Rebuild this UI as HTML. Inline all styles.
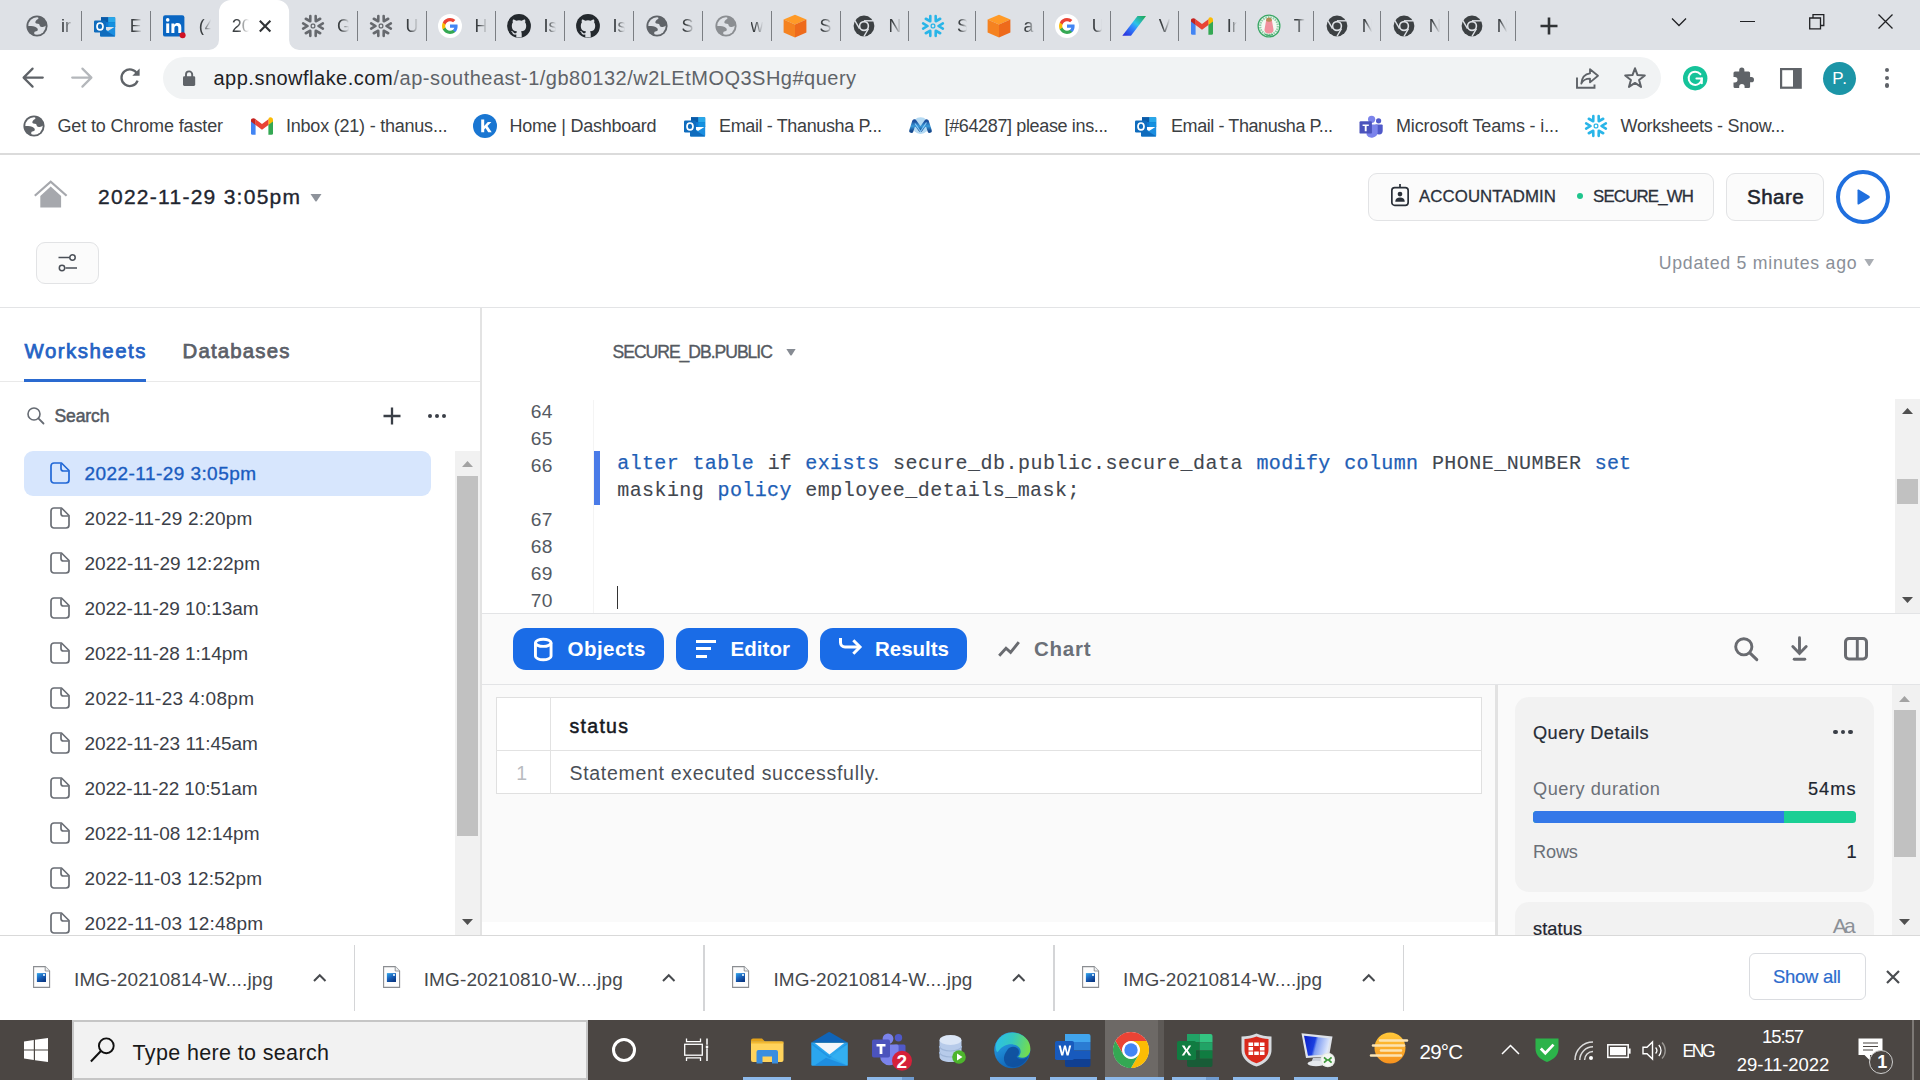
<!DOCTYPE html>
<html lang="en"><head><meta charset="utf-8"><title>2022-11-29 3:05pm - Snowflake</title>
<style>
*{box-sizing:border-box;margin:0;padding:0}
html,body{width:1920px;height:1080px;overflow:hidden;background:#fff}
body{position:relative;font-family:"Liberation Sans",sans-serif;color:#1e252f;-webkit-font-smoothing:antialiased}
div,span,svg,p,h1,h2,b,i,a,li,ul,nav,header,footer,section,aside,main,button{position:absolute;display:block;white-space:pre}
section,header,footer,aside,main,nav,ul{position:static}
svg{overflow:visible}
.m{font-family:"Liberation Mono",monospace}
.fade{-webkit-mask-image:linear-gradient(90deg,#000 0,#000 30%,transparent 100%);mask-image:linear-gradient(90deg,#000 0,#000 30%,transparent 100%);overflow:hidden}
</style></head>
<body>
<header>
<div style="left:0px;top:0px;width:1920px;height:50px;background:#dee1e6;"></div>
<svg style="left:0px;top:0px;" width="1920" height="50" viewBox="0 0 1920 50"><path d="M209 50A10 10 0 0 0 219 40L219 12A12 12 0 0 1 231 0L277.1 0A12 12 0 0 1 289.1 12L289.1 40A10 10 0 0 0 299.1 50Z" fill="#fff"/></svg>
<div style="left:81px;top:11px;width:1px;height:30px;background:#7b7e83;"></div>
<div style="left:150px;top:11px;width:1px;height:30px;background:#7b7e83;"></div>
<div style="left:357px;top:11px;width:1px;height:30px;background:#7b7e83;"></div>
<div style="left:426px;top:11px;width:1px;height:30px;background:#7b7e83;"></div>
<div style="left:495px;top:11px;width:1px;height:30px;background:#7b7e83;"></div>
<div style="left:564px;top:11px;width:1px;height:30px;background:#7b7e83;"></div>
<div style="left:633px;top:11px;width:1px;height:30px;background:#7b7e83;"></div>
<div style="left:702px;top:11px;width:1px;height:30px;background:#7b7e83;"></div>
<div style="left:771px;top:11px;width:1px;height:30px;background:#7b7e83;"></div>
<div style="left:840px;top:11px;width:1px;height:30px;background:#7b7e83;"></div>
<div style="left:908px;top:11px;width:1px;height:30px;background:#7b7e83;"></div>
<div style="left:975px;top:11px;width:1px;height:30px;background:#7b7e83;"></div>
<div style="left:1043px;top:11px;width:1px;height:30px;background:#7b7e83;"></div>
<div style="left:1110px;top:11px;width:1px;height:30px;background:#7b7e83;"></div>
<div style="left:1178px;top:11px;width:1px;height:30px;background:#7b7e83;"></div>
<div style="left:1245px;top:11px;width:1px;height:30px;background:#7b7e83;"></div>
<div style="left:1313px;top:11px;width:1px;height:30px;background:#7b7e83;"></div>
<div style="left:1380px;top:11px;width:1px;height:30px;background:#7b7e83;"></div>
<div style="left:1448px;top:11px;width:1px;height:30px;background:#7b7e83;"></div>
<div style="left:1515px;top:11px;width:1px;height:30px;background:#7b7e83;"></div>
<svg style="left:24.5px;top:14px;" width="24" height="24" viewBox="0 0 24 24"><circle cx="12" cy="12" r="10.6" fill="#5f6368"/><circle cx="12" cy="12" r="8.7" fill="#dee1e6"/><path d="M13.3 2.5L13.3 4.9C11.5 5.5 10.3 7 10.3 8.4C10.6 9.2 11 9.5 11.4 9.5L14 9.9C14.6 10.5 14.8 11.3 14.8 12.1C15.6 12.9 16.6 13.1 17.7 12.9C19 12.7 20 12.3 20.7 11.7L21.6 11A9.8 9.8 0 0 0 13.3 2.5Z" fill="#5f6368"/><path d="M2.3 12.5C3 12.2 4 12.1 5.1 12.1C7 12 8.6 12.2 10 12.700C11.4 13.2 12.3 13.9 12.6 14.700C12.9 15.4 12.9 16 12.6 16.6C11.8 17.3 10.6 17.5 9.6 17.700C9.2 18.3 9.1 18.9 9.2 19.5L10 21.5A9.8 9.8 0 0 1 2.3 12.5Z" fill="#5f6368"/></svg>
<span class="fade" style="left:61px;top:17px;font-size:18px;line-height:18px;color:#3c4043;width:12.2px;">ir</span>
<svg style="left:93.2px;top:14px;" width="24" height="24" viewBox="0 0 24 24"><path d="M8 3.2h13.2a1 1 0 0 1 1 1V13H8z" fill="#0f6cbd"/><path d="M8 3.2h7.2v5H8z" fill="#0a5aa8"/><path d="M15.2 3.2h7v5h-7z" fill="#28a8ea"/><path d="M8 8.2h7.2v4.8H8z" fill="#0f78d4"/><path d="M15.2 8.2h7v4.8h-7z" fill="#1490df"/><path d="M7 11.5l8 5.5 7.2-4.6v9a1 1 0 0 1-1 1H8a1 1 0 0 1-1-1z" fill="#1b8ee0"/><path d="M7 13l15.2 9.2a1 1 0 0 1-.9.3H8a1 1 0 0 1-1-1z" fill="#0f6cbd"/><rect x="1" y="6.4" width="12" height="12" rx="1.2" fill="#0f6cbd"/><ellipse cx="7" cy="12.4" rx="3" ry="3.4" fill="none" stroke="#fff" stroke-width="1.7"/></svg>
<span class="fade" style="left:129.7px;top:17px;font-size:18px;line-height:18px;color:#3c4043;width:12.6px;">E</span>
<svg style="left:162.3px;top:14px;" width="24" height="24" viewBox="0 0 24 24"><rect x="1" y="1.2" width="21.4" height="21.4" rx="2.2" fill="#0a66c2"/><rect x="4.2" y="9.4" width="3" height="9.6" fill="#fff"/><circle cx="5.7" cy="5.9" r="1.8" fill="#fff"/><path d="M9.4 9.4h2.9v1.4c.6-1 1.7-1.7 3.3-1.7 2.7 0 3.7 1.7 3.7 4.4V19h-3v-4.9c0-1.4-.4-2.3-1.7-2.3-1.4 0-2.2 1-2.2 2.4V19h-3z" fill="#fff"/><circle cx="20.6" cy="21.2" r="3" fill="#d11124"/></svg>
<span class="fade" style="left:198.8px;top:17px;font-size:18px;line-height:18px;color:#3c4043;width:12.4px;">(4</span>
<span class="fade" style="left:231.7px;top:17px;font-size:18px;line-height:18px;color:#3c4043;width:17px;">20</span>
<svg style="left:259.4px;top:19.6px;" width="12.2" height="12.2" viewBox="0 0 12.2 12.2"><path d="M0.800 0.800L11.400 11.400M11.400 0.800L0.800 11.400" stroke="#303336" stroke-width="2.100" fill="none"/></svg>
<svg style="left:300.5px;top:14px;" width="24" height="24" viewBox="0 0 24 24"><path d="M21.87 14.63L17.5 12L21.87 9.37M14.66 21.86L14.75 16.76L19.21 19.24M4.79 19.24L9.25 16.76L9.34 21.86M2.13 9.37L6.5 12L2.13 14.63M9.34 2.14L9.25 7.24L4.79 4.76M19.21 4.76L14.75 7.24L14.66 2.14" stroke="#66696e" stroke-width="2.6" fill="none" stroke-linecap="round" stroke-linejoin="round"/><rect x="10.2" y="10.2" width="3.6" height="3.6" rx="1.1" fill="none" stroke="#66696e" stroke-width="1.3"/></svg>
<span class="fade" style="left:337px;top:17px;font-size:18px;line-height:18px;color:#3c4043;width:12px;">G</span>
<svg style="left:369px;top:14px;" width="24" height="24" viewBox="0 0 24 24"><path d="M21.87 14.63L17.5 12L21.87 9.37M14.66 21.86L14.75 16.76L19.21 19.24M4.79 19.24L9.25 16.76L9.34 21.86M2.13 9.37L6.5 12L2.13 14.63M9.34 2.14L9.25 7.24L4.79 4.76M19.21 4.76L14.75 7.24L14.66 2.14" stroke="#66696e" stroke-width="2.6" fill="none" stroke-linecap="round" stroke-linejoin="round"/><rect x="10.2" y="10.2" width="3.6" height="3.6" rx="1.1" fill="none" stroke="#66696e" stroke-width="1.3"/></svg>
<span class="fade" style="left:405.5px;top:17px;font-size:18px;line-height:18px;color:#3c4043;width:12.5px;">U</span>
<svg style="left:438px;top:14px;" width="24" height="24" viewBox="0 0 24 24"><circle cx="12" cy="12" r="12" fill="#fff"/><path d="M19.6 12.2c0-.6-.05-1.1-.15-1.6H12v3.1h4.3c-.2 1-.75 1.85-1.6 2.4v2h2.6c1.5-1.4 2.3-3.45 2.3-5.9z" fill="#4285f4"/><path d="M12 20c2.15 0 3.95-.7 5.3-1.95l-2.6-2c-.7.5-1.65.8-2.7.8-2.1 0-3.85-1.4-4.5-3.3H4.8v2.05C6.1 18.2 8.85 20 12 20z" fill="#34a853"/><path d="M7.5 13.55c-.15-.5-.25-1-.25-1.55s.1-1.05.25-1.55V8.4H4.8C4.3 9.5 4 10.7 4 12s.3 2.5.8 3.6z" fill="#fbbc05"/><path d="M12 7.15c1.2 0 2.25.4 3.1 1.2l2.3-2.3C16 4.75 14.15 4 12 4 8.85 4 6.1 5.8 4.8 8.4l2.7 2.05c.65-1.9 2.4-3.3 4.5-3.3z" fill="#ea4335"/></svg>
<span class="fade" style="left:474.5px;top:17px;font-size:18px;line-height:18px;color:#3c4043;width:12.5px;">H</span>
<svg style="left:507px;top:14px;" width="24" height="24" viewBox="0 0 24 24"><circle cx="12" cy="12" r="11.9" fill="#24292e"/><path d="M9.3 23.6v-3.1c-3 .65-3.7-1.3-3.7-1.3-.5-1.3-1.2-1.6-1.2-1.6-1-.7.1-.7.1-.7 1.1.1 1.7 1.1 1.7 1.1 1 1.7 2.6 1.2 3.2.9.1-.7.4-1.2.7-1.5-2.6-.3-5.3-1.3-5.3-5.7 0-1.3.4-2.3 1.1-3.100-.1-.3-.5-1.500.1-3.100 0 0 1-.3 3.100 1.200a10.600 10.600 0 0 1 5.800 0c2.100-1.500 3.100-1.200 3.100-1.200.600 1.600.200 2.800.100 3.100.700.800 1.100 1.800 1.100 3.100 0 4.400-2.700 5.400-5.300 5.700.400.400.800 1.100.800 2.200v3.900z" fill="#dee1e6"/></svg>
<span class="fade" style="left:543.5px;top:17px;font-size:18px;line-height:18px;color:#3c4043;width:12.5px;">Is</span>
<svg style="left:576px;top:14px;" width="24" height="24" viewBox="0 0 24 24"><circle cx="12" cy="12" r="11.9" fill="#24292e"/><path d="M9.3 23.6v-3.1c-3 .65-3.7-1.3-3.7-1.3-.5-1.3-1.2-1.6-1.2-1.6-1-.7.1-.7.1-.7 1.1.1 1.7 1.1 1.7 1.1 1 1.7 2.6 1.2 3.2.9.1-.7.4-1.2.7-1.5-2.6-.3-5.3-1.3-5.3-5.7 0-1.3.4-2.3 1.1-3.100-.1-.3-.5-1.500.1-3.100 0 0 1-.3 3.100 1.200a10.600 10.600 0 0 1 5.800 0c2.100-1.500 3.100-1.200 3.100-1.200.600 1.600.200 2.800.100 3.100.700.800 1.100 1.800 1.100 3.100 0 4.400-2.700 5.400-5.300 5.700.400.400.800 1.100.800 2.200v3.900z" fill="#dee1e6"/></svg>
<span class="fade" style="left:612.5px;top:17px;font-size:18px;line-height:18px;color:#3c4043;width:12.5px;">Is</span>
<svg style="left:645px;top:14px;" width="24" height="24" viewBox="0 0 24 24"><circle cx="12" cy="12" r="10.6" fill="#5f6368"/><circle cx="12" cy="12" r="8.7" fill="#dee1e6"/><path d="M13.3 2.5L13.3 4.9C11.5 5.5 10.3 7 10.3 8.4C10.6 9.2 11 9.5 11.4 9.5L14 9.9C14.6 10.5 14.8 11.3 14.8 12.1C15.6 12.9 16.6 13.1 17.7 12.9C19 12.7 20 12.3 20.7 11.7L21.6 11A9.8 9.8 0 0 0 13.3 2.5Z" fill="#5f6368"/><path d="M2.3 12.5C3 12.2 4 12.1 5.1 12.1C7 12 8.6 12.2 10 12.700C11.4 13.2 12.3 13.9 12.6 14.700C12.9 15.4 12.9 16 12.6 16.6C11.8 17.3 10.6 17.5 9.6 17.700C9.2 18.3 9.1 18.9 9.2 19.5L10 21.5A9.8 9.8 0 0 1 2.3 12.5Z" fill="#5f6368"/></svg>
<span class="fade" style="left:681.5px;top:17px;font-size:18px;line-height:18px;color:#3c4043;width:12.5px;">S</span>
<svg style="left:714px;top:14px;" width="24" height="24" viewBox="0 0 24 24"><circle cx="12" cy="12" r="10.6" fill="#8b8e92"/><circle cx="12" cy="12" r="8.7" fill="#dee1e6"/><path d="M13.3 2.5L13.3 4.9C11.5 5.5 10.3 7 10.3 8.4C10.6 9.2 11 9.5 11.4 9.5L14 9.9C14.6 10.5 14.8 11.3 14.8 12.1C15.6 12.9 16.6 13.1 17.7 12.9C19 12.7 20 12.3 20.7 11.7L21.6 11A9.8 9.8 0 0 0 13.3 2.5Z" fill="#8b8e92"/><path d="M2.3 12.5C3 12.2 4 12.1 5.1 12.1C7 12 8.6 12.2 10 12.700C11.4 13.2 12.3 13.9 12.6 14.700C12.9 15.4 12.9 16 12.6 16.6C11.8 17.3 10.6 17.5 9.6 17.700C9.2 18.3 9.1 18.9 9.2 19.5L10 21.5A9.8 9.8 0 0 1 2.3 12.5Z" fill="#8b8e92"/></svg>
<span class="fade" style="left:750.5px;top:17px;font-size:18px;line-height:18px;color:#3c4043;width:12.5px;">w</span>
<svg style="left:783px;top:14px;" width="24" height="24" viewBox="0 0 24 24"><path d="M12 0.800L23.400 5.600L12 10.600L0.600 5.600Z" fill="#ff9a27"/><path d="M0.600 5.600L12 10.600V23.600L0.600 18.400Z" fill="#f58220"/><path d="M23.400 5.600L12 10.600V23.600L23.400 18.400Z" fill="#ee6a1b"/></svg>
<span class="fade" style="left:819.5px;top:17px;font-size:18px;line-height:18px;color:#3c4043;width:12.5px;">S</span>
<svg style="left:852px;top:14px;" width="24" height="24" viewBox="0 0 24 24"><circle cx="12" cy="12" r="10.4" fill="#3c4043"/><circle cx="12" cy="12" r="5.200" fill="#dee1e6"/><circle cx="12" cy="12" r="3.600" fill="#3c4043"/><path d="M12 6.800H21.200" stroke="#dee1e6" stroke-width="1.400"/><path d="M7.500 14.600L2.900 6.700" stroke="#dee1e6" stroke-width="1.400"/><path d="M16.500 14.600L11.900 22.500" stroke="#dee1e6" stroke-width="1.400"/></svg>
<span class="fade" style="left:888.5px;top:17px;font-size:18px;line-height:18px;color:#3c4043;width:12px;">N</span>
<svg style="left:920.5px;top:14px;" width="24" height="24" viewBox="0 0 24 24"><path d="M21.87 14.63L17.5 12L21.87 9.37M14.66 21.86L14.75 16.76L19.21 19.24M4.79 19.24L9.25 16.76L9.34 21.86M2.13 9.37L6.5 12L2.13 14.63M9.34 2.14L9.25 7.24L4.79 4.76M19.21 4.76L14.75 7.24L14.66 2.14" stroke="#29b5e8" stroke-width="2.6" fill="none" stroke-linecap="round" stroke-linejoin="round"/><rect x="10.2" y="10.2" width="3.6" height="3.6" rx="1.1" fill="none" stroke="#29b5e8" stroke-width="1.3"/></svg>
<span class="fade" style="left:957px;top:17px;font-size:18px;line-height:18px;color:#3c4043;width:10px;">S</span>
<svg style="left:987px;top:14px;" width="24" height="24" viewBox="0 0 24 24"><path d="M12 0.800L23.400 5.600L12 10.600L0.600 5.600Z" fill="#ff9a27"/><path d="M0.600 5.600L12 10.600V23.600L0.600 18.400Z" fill="#f58220"/><path d="M23.400 5.600L12 10.600V23.600L23.400 18.400Z" fill="#ee6a1b"/></svg>
<span class="fade" style="left:1023.5px;top:17px;font-size:18px;line-height:18px;color:#3c4043;width:11.75px;">a</span>
<svg style="left:1055.25px;top:14px;" width="24" height="24" viewBox="0 0 24 24"><circle cx="12" cy="12" r="12" fill="#fff"/><path d="M19.6 12.2c0-.6-.05-1.1-.15-1.6H12v3.1h4.3c-.2 1-.75 1.85-1.6 2.4v2h2.6c1.5-1.4 2.3-3.45 2.3-5.9z" fill="#4285f4"/><path d="M12 20c2.15 0 3.95-.7 5.3-1.95l-2.6-2c-.7.5-1.65.8-2.7.8-2.1 0-3.85-1.4-4.5-3.3H4.8v2.05C6.1 18.2 8.85 20 12 20z" fill="#34a853"/><path d="M7.5 13.55c-.15-.5-.25-1-.25-1.55s.1-1.05.25-1.55V8.4H4.8C4.3 9.5 4 10.7 4 12s.3 2.5.8 3.6z" fill="#fbbc05"/><path d="M12 7.15c1.2 0 2.25.4 3.1 1.2l2.3-2.3C16 4.75 14.15 4 12 4 8.85 4 6.1 5.8 4.8 8.4l2.7 2.05c.65-1.9 2.4-3.3 4.5-3.3z" fill="#ea4335"/></svg>
<span class="fade" style="left:1091.75px;top:17px;font-size:18px;line-height:18px;color:#3c4043;width:10.5px;">U</span>
<svg style="left:1122.25px;top:14px;" width="24" height="24" viewBox="0 0 24 24"><defs><linearGradient id="sg1" x1="0" y1="1" x2="1" y2="0"><stop offset="0" stop-color="#2a22d8"/><stop offset="0.450" stop-color="#2f8dff"/><stop offset="0.600" stop-color="#2cc4e8"/><stop offset="1" stop-color="#1fa64a"/></linearGradient></defs><path d="M0.300 21.800L15.500 2H24L9 21.800Z" fill="url(#sg1)"/></svg>
<span class="fade" style="left:1158.75px;top:17px;font-size:18px;line-height:18px;color:#3c4043;width:11.5px;">V</span>
<svg style="left:1190.25px;top:14px;" width="24" height="24" viewBox="0 0 24 24"><path d="M1 6.200V19.400a1.400 1.400 0 0 0 1.400 1.400H5.600V10.200z" fill="#4285f4"/><path d="M23 6.200V19.400a1.400 1.400 0 0 1-1.400 1.400H18.400V10.200z" fill="#34a853"/><path d="M18.400 5.200V10.900L23 7.400V5.700c0-2.100-2.400-3.300-4.100-2z" fill="#fbbc04"/><path d="M5.600 10.900V5.200L12 10l6.400-4.800v5.700L12 15.700z" fill="#ea4335"/><path d="M1 5.700v1.700l4.600 3.500V5.200l-.5-.4C3.400 3.500 1 4.700 1 5.700z" fill="#c5221f"/></svg>
<span class="fade" style="left:1226.75px;top:17px;font-size:18px;line-height:18px;color:#3c4043;width:10.5px;">In</span>
<svg style="left:1257.25px;top:14px;" width="24" height="24" viewBox="0 0 24 24"><circle cx="12" cy="12" r="11.500" fill="#f3f8f3"/><circle cx="12" cy="12" r="10.900" fill="none" stroke="#3aa566" stroke-width="1.300"/><circle cx="12" cy="12" r="8.800" fill="none" stroke="#8fd0a8" stroke-width="2.200" stroke-dasharray="1.600 0.900"/><path d="M12 4c1.700 0 2.800 1.300 3 3.100l1.500 8.500c.3 2-1.200 3.900-4.500 3.900s-4.800-1.900-4.500-3.900L9 7.100C9.200 5.300 10.300 4 12 4z" fill="#f0909d"/><path d="M12 3.600c1.600 0 2.800 1.100 3 2.900-.800.900-1.800 1.200-3 1.200s-2.200-.3-3-1.200c.2-1.800 1.400-2.900 3-2.900z" fill="#b98a55"/><path d="M8 20.500c2.500 1 5.500 1 8 0" stroke="#3aa566" stroke-width="1.200" fill="none"/></svg>
<span class="fade" style="left:1293.75px;top:17px;font-size:18px;line-height:18px;color:#3c4043;width:11.5px;">T</span>
<svg style="left:1325.25px;top:14px;" width="24" height="24" viewBox="0 0 24 24"><circle cx="12" cy="12" r="10.4" fill="#3c4043"/><circle cx="12" cy="12" r="5.200" fill="#dee1e6"/><circle cx="12" cy="12" r="3.600" fill="#3c4043"/><path d="M12 6.800H21.200" stroke="#dee1e6" stroke-width="1.400"/><path d="M7.500 14.600L2.900 6.700" stroke="#dee1e6" stroke-width="1.400"/><path d="M16.500 14.600L11.900 22.500" stroke="#dee1e6" stroke-width="1.400"/></svg>
<span class="fade" style="left:1361.75px;top:17px;font-size:18px;line-height:18px;color:#3c4043;width:10.5px;">N</span>
<svg style="left:1392.25px;top:14px;" width="24" height="24" viewBox="0 0 24 24"><circle cx="12" cy="12" r="10.4" fill="#3c4043"/><circle cx="12" cy="12" r="5.200" fill="#dee1e6"/><circle cx="12" cy="12" r="3.600" fill="#3c4043"/><path d="M12 6.800H21.200" stroke="#dee1e6" stroke-width="1.400"/><path d="M7.500 14.600L2.900 6.700" stroke="#dee1e6" stroke-width="1.400"/><path d="M16.500 14.600L11.900 22.500" stroke="#dee1e6" stroke-width="1.400"/></svg>
<span class="fade" style="left:1428.75px;top:17px;font-size:18px;line-height:18px;color:#3c4043;width:11.5px;">N</span>
<svg style="left:1460.25px;top:14px;" width="24" height="24" viewBox="0 0 24 24"><circle cx="12" cy="12" r="10.4" fill="#3c4043"/><circle cx="12" cy="12" r="5.200" fill="#dee1e6"/><circle cx="12" cy="12" r="3.600" fill="#3c4043"/><path d="M12 6.800H21.200" stroke="#dee1e6" stroke-width="1.400"/><path d="M7.500 14.600L2.900 6.700" stroke="#dee1e6" stroke-width="1.400"/><path d="M16.500 14.600L11.900 22.500" stroke="#dee1e6" stroke-width="1.400"/></svg>
<span class="fade" style="left:1496.75px;top:17px;font-size:18px;line-height:18px;color:#3c4043;width:10.5px;">N</span>
<svg style="left:1540.3px;top:16.8px;" width="18" height="18" viewBox="0 0 18 18"><path d="M9 0.500V17.500M0.500 9H17.500" stroke="#303336" stroke-width="2.600" fill="none"/></svg>
<svg style="left:1671px;top:16.5px;" width="16" height="10" viewBox="0 0 16 10"><path d="M1 1.5 L8 8.5 L15 1.5" stroke="#202124" stroke-width="1.3" fill="none"/></svg>
<div style="left:1740px;top:20.5px;width:15px;height:1.3px;background:#202124;"></div>
<svg style="left:1809px;top:14px;" width="15.5" height="15.5" viewBox="0 0 15.5 15.5"><path d="M0.700 4h10.800v10.800h-10.800z M4 4v-3.300h10.800v10.800h-3.300" stroke="#202124" stroke-width="1.300" fill="none"/></svg>
<svg style="left:1878px;top:14px;" width="15" height="15" viewBox="0 0 15 15"><path d="M0.5 0.5L14.5 14.5M14.5 0.5L0.5 14.5" stroke="#202124" stroke-width="1.3" fill="none"/></svg>
</header>
<nav>
<div style="left:162.5px;top:57px;width:1498.5px;height:41.75px;background:#f1f3f4;border-radius:21px;"></div>
<svg style="left:22px;top:67px;" width="22" height="22" viewBox="0 0 22 22"><path d="M20.800 10.600H2.400M10.600 1.600L1.600 10.600L10.600 19.600" stroke="#5f6368" stroke-width="2.200" fill="none" stroke-linecap="round" stroke-linejoin="round"/></svg>
<svg style="left:70.5px;top:67px;" width="22" height="22" viewBox="0 0 22 22"><path d="M1.200 10.600H19.600M11.400 1.600L20.400 10.600L11.400 19.600" stroke="#b4b7bb" stroke-width="2.200" fill="none" stroke-linecap="round" stroke-linejoin="round"/></svg>
<svg style="left:118px;top:66px;" width="24" height="24" viewBox="0 0 24 24"><path d="M19.300 8.200A8.300 8.300 0 1 0 19.600 14.600" stroke="#5f6368" stroke-width="2.300" fill="none"/><path d="M21.600 2.500V9.800H14.300Z" fill="#5f6368"/></svg>
<svg style="left:182px;top:70px;" width="14" height="17" viewBox="0 0 14 17"><rect x="1" y="6.300" width="12.200" height="9.600" rx="1.300" fill="#5f6368"/><path d="M4 7V4.500a3.100 3.100 0 0 1 6.200 0V7" stroke="#5f6368" stroke-width="1.900" fill="none"/></svg>
<svg style="left:1576px;top:67.5px;" width="23.5" height="21.5" viewBox="0 0 23.5 21.5"><path d="M1 9.500V19.800H18.500V16.500" stroke="#5f6368" stroke-width="1.900" fill="none"/><path d="M14 1.200L22 7.800L14 14.400V10.600C9.500 10.600 6.800 12.300 5.300 15.600C5.800 10 8.800 6 14 5.400Z" stroke="#5f6368" stroke-width="1.800" fill="none" stroke-linejoin="round"/></svg>
<svg style="left:1624px;top:67px;" width="22" height="22" viewBox="0 0 22 22"><path d="M11 1.3L13.53 8.12L20.8 8.42L15.09 12.93L17.05 19.93L11 15.9L4.95 19.93L6.91 12.93L1.2 8.42L8.47 8.12Z" stroke="#5f6368" stroke-width="2" fill="none" stroke-linejoin="round"/></svg>
<svg style="left:1682.8px;top:65.9px;" width="24.4" height="24.4" viewBox="0 0 24.4 24.4"><circle cx="12.200" cy="12.200" r="12.200" fill="#15c39a"/><path d="M17.400 8.200A6.600 6.600 0 1 0 18.800 12.600H13.400" stroke="#fff" stroke-width="2" fill="none" stroke-linecap="round"/><path d="M18.800 12.600V17.200" stroke="#fff" stroke-width="2" stroke-linecap="round"/></svg>
<svg style="left:1731px;top:66.6px;" width="23" height="22" viewBox="0 0 23 22"><path d="M8.200 3.200a2.600 2.600 0 0 1 5.200 0V4.600h4.200a1.500 1.500 0 0 1 1.500 1.500v4h1.300a2.600 2.600 0 0 1 0 5.200h-1.300v4.200a1.500 1.500 0 0 1-1.500 1.500h-4v-1.400a2.700 2.700 0 0 0-5.400 0V21H4a1.500 1.500 0 0 1-1.500-1.500v-4.100H3.800a2.700 2.700 0 0 0 0-5.400H2.500V6.100A1.500 1.500 0 0 1 4 4.600h4.200z" fill="#5f6368"/></svg>
<svg style="left:1780px;top:67.5px;" width="22" height="21" viewBox="0 0 22 21"><rect x="1.100" y="1.100" width="19.600" height="18.600" stroke="#5f6368" stroke-width="2.200" fill="none"/><rect x="13" y="1" width="8" height="19" fill="#5f6368"/></svg>
<div style="left:1884.5px;top:67.7px;width:4.6px;height:4.6px;background:#5f6368;border-radius:3px;"></div>
<div style="left:1884.5px;top:75.8px;width:4.6px;height:4.6px;background:#5f6368;border-radius:3px;"></div>
<div style="left:1884.5px;top:83.4px;width:4.6px;height:4.6px;background:#5f6368;border-radius:3px;"></div>
<span style="left:213.5px;top:68px;font-size:20px;line-height:20px;color:#202124;letter-spacing:0.49px;">app.snowflake.com</span>
<span style="left:393.5px;top:68px;font-size:20px;line-height:20px;color:#5f6368;letter-spacing:0.49px;">/ap-southeast-1/gb80132/w2LEtMOQ3SHg#query</span>
<div style="left:1822.5px;top:61.5px;width:33px;height:33px;background:#1c95a7;border-radius:17px;"></div>
<span style="left:1832.3px;top:70px;font-size:17px;line-height:17px;color:#fff;letter-spacing:0.73px;">P.</span>
</nav>
<nav>
<svg style="left:22px;top:114px;" width="24" height="24" viewBox="0 0 24 24"><circle cx="12" cy="12" r="10.6" fill="#5f6368"/><circle cx="12" cy="12" r="8.7" fill="#fff"/><path d="M13.3 2.5L13.3 4.9C11.5 5.5 10.3 7 10.3 8.4C10.6 9.2 11 9.5 11.4 9.5L14 9.9C14.6 10.5 14.8 11.3 14.8 12.1C15.6 12.9 16.6 13.1 17.7 12.9C19 12.7 20 12.3 20.7 11.7L21.6 11A9.8 9.8 0 0 0 13.3 2.5Z" fill="#5f6368"/><path d="M2.3 12.5C3 12.2 4 12.1 5.1 12.1C7 12 8.6 12.2 10 12.700C11.4 13.2 12.3 13.9 12.6 14.700C12.9 15.4 12.9 16 12.6 16.6C11.8 17.3 10.6 17.5 9.6 17.700C9.2 18.3 9.1 18.9 9.2 19.5L10 21.5A9.8 9.8 0 0 1 2.3 12.5Z" fill="#5f6368"/></svg>
<span style="left:57.5px;top:117px;font-size:18px;line-height:18px;color:#3c4043;letter-spacing:-0.13px;">Get to Chrome faster</span>
<svg style="left:250px;top:114px;" width="24" height="24" viewBox="0 0 24 24"><path d="M1 6.200V19.400a1.400 1.400 0 0 0 1.400 1.400H5.600V10.200z" fill="#4285f4"/><path d="M23 6.200V19.400a1.400 1.400 0 0 1-1.400 1.400H18.400V10.200z" fill="#34a853"/><path d="M18.400 5.200V10.900L23 7.400V5.700c0-2.100-2.400-3.300-4.100-2z" fill="#fbbc04"/><path d="M5.600 10.900V5.200L12 10l6.400-4.800v5.700L12 15.700z" fill="#ea4335"/><path d="M1 5.700v1.700l4.600 3.500V5.200l-.5-.4C3.400 3.500 1 4.700 1 5.700z" fill="#c5221f"/></svg>
<span style="left:286px;top:117px;font-size:18px;line-height:18px;color:#3c4043;letter-spacing:-0.22px;">Inbox (21) - thanus...</span>
<svg style="left:473px;top:114px;" width="24" height="24" viewBox="0 0 24 24"><circle cx="12" cy="12" r="12" fill="#1976d2"/><path d="M8.200 5.500h3v6.400l3.600-4h3.600l-3.900 4 4.200 6.400h-3.500l-2.700-4.300-1.300 1.400v2.900h-3z" fill="#fff"/></svg>
<span style="left:509.5px;top:117px;font-size:18px;line-height:18px;color:#3c4043;letter-spacing:-0.25px;">Home | Dashboard</span>
<svg style="left:683px;top:114px;" width="24" height="24" viewBox="0 0 24 24"><path d="M8 3.2h13.2a1 1 0 0 1 1 1V13H8z" fill="#0f6cbd"/><path d="M8 3.2h7.2v5H8z" fill="#0a5aa8"/><path d="M15.2 3.2h7v5h-7z" fill="#28a8ea"/><path d="M8 8.2h7.2v4.8H8z" fill="#0f78d4"/><path d="M15.2 8.2h7v4.8h-7z" fill="#1490df"/><path d="M7 11.5l8 5.5 7.2-4.6v9a1 1 0 0 1-1 1H8a1 1 0 0 1-1-1z" fill="#1b8ee0"/><path d="M7 13l15.2 9.2a1 1 0 0 1-.9.3H8a1 1 0 0 1-1-1z" fill="#0f6cbd"/><rect x="1" y="6.4" width="12" height="12" rx="1.2" fill="#0f6cbd"/><ellipse cx="7" cy="12.4" rx="3" ry="3.4" fill="none" stroke="#fff" stroke-width="1.7"/></svg>
<span style="left:719px;top:117px;font-size:18px;line-height:18px;color:#3c4043;letter-spacing:-0.37px;">Email - Thanusha P...</span>
<svg style="left:909px;top:114px;" width="24" height="24" viewBox="0 0 24 24"><defs><linearGradient id="sg2" x1="0" y1="0" x2="0" y2="1"><stop offset="0" stop-color="#1c4f9c"/><stop offset="0.5" stop-color="#3a9ad9"/><stop offset="1" stop-color="#154a8f"/></linearGradient></defs><circle cx="11.600" cy="11.600" r="8.300" fill="#b5daf3"/><path d="M2.300 16.800L5.300 7.400L11.500 15.800L17.700 7.400L20.700 16.800" stroke="url(#sg2)" stroke-width="4.300" fill="none" stroke-linejoin="round" stroke-linecap="round"/><path d="M6 9.500L11.500 17.500L17.500 8.500" stroke="#8fd0ff" stroke-width="1.100" fill="none" opacity="0.9"/></svg>
<span style="left:944.5px;top:117px;font-size:18px;line-height:18px;color:#3c4043;letter-spacing:-0.36px;">[#64287] please ins...</span>
<svg style="left:1134px;top:114px;" width="24" height="24" viewBox="0 0 24 24"><path d="M8 3.2h13.2a1 1 0 0 1 1 1V13H8z" fill="#0f6cbd"/><path d="M8 3.2h7.2v5H8z" fill="#0a5aa8"/><path d="M15.2 3.2h7v5h-7z" fill="#28a8ea"/><path d="M8 8.2h7.2v4.8H8z" fill="#0f78d4"/><path d="M15.2 8.2h7v4.8h-7z" fill="#1490df"/><path d="M7 11.5l8 5.5 7.2-4.6v9a1 1 0 0 1-1 1H8a1 1 0 0 1-1-1z" fill="#1b8ee0"/><path d="M7 13l15.2 9.2a1 1 0 0 1-.9.3H8a1 1 0 0 1-1-1z" fill="#0f6cbd"/><rect x="1" y="6.4" width="12" height="12" rx="1.2" fill="#0f6cbd"/><ellipse cx="7" cy="12.4" rx="3" ry="3.4" fill="none" stroke="#fff" stroke-width="1.7"/></svg>
<span style="left:1171px;top:117px;font-size:18px;line-height:18px;color:#3c4043;letter-spacing:-0.42px;">Email - Thanusha P...</span>
<svg style="left:1359px;top:114px;" width="24" height="24" viewBox="0 0 24 24"><circle cx="19.600" cy="6.800" r="2.600" fill="#5059c9"/><path d="M16.500 10.600h6.200a1 1 0 0 1 1 1v5.200a3.600 3.600 0 0 1-7.200 0z" fill="#5059c9"/><circle cx="12.600" cy="5.300" r="3.600" fill="#7b83eb"/><path d="M7.600 10.600h10a1.100 1.100 0 0 1 1.100 1.100v6.600a6 6 0 0 1-11.100 2.600z" fill="#7b83eb"/><rect x="0.500" y="7.200" width="12.400" height="12.400" rx="1.200" fill="#4b53bc"/><path d="M3.600 10.400h6.200v1.700H7.650v5.100H5.750v-5.100H3.600z" fill="#fff"/></svg>
<span style="left:1396px;top:117px;font-size:18px;line-height:18px;color:#3c4043;letter-spacing:-0.13px;">Microsoft Teams - i...</span>
<svg style="left:1584px;top:114px;" width="24" height="24" viewBox="0 0 24 24"><path d="M21.87 14.63L17.5 12L21.87 9.37M14.66 21.86L14.75 16.76L19.21 19.24M4.79 19.24L9.25 16.76L9.34 21.86M2.13 9.37L6.5 12L2.13 14.63M9.34 2.14L9.25 7.24L4.79 4.76M19.21 4.76L14.75 7.24L14.66 2.14" stroke="#29b5e8" stroke-width="2.6" fill="none" stroke-linecap="round" stroke-linejoin="round"/><rect x="10.2" y="10.2" width="3.6" height="3.6" rx="1.1" fill="none" stroke="#29b5e8" stroke-width="1.3"/></svg>
<span style="left:1620.5px;top:117px;font-size:18px;line-height:18px;color:#3c4043;letter-spacing:-0.28px;">Worksheets - Snow...</span>
<div style="left:0px;top:153px;width:1920px;height:2px;background:#dbdbdb;"></div>
</nav>
<section>
<svg style="left:34px;top:180px;" width="34" height="28" viewBox="0 0 34 28"><path d="M0.800 15.800L16.700 1.600L32.600 15.800" stroke="#a6a8ad" stroke-width="2.200" fill="none"/><path d="M6.300 16L16.700 6.600L27.100 16V27.500H6.300Z" fill="#a6a8ad"/></svg>
<span style="left:98px;top:186px;font-size:21px;line-height:21px;color:#1e252f;letter-spacing:1.27px;-webkit-text-stroke:0.35px #1e252f;">2022-11-29 3:05pm</span>
<svg style="left:310px;top:194px;" width="12" height="7.5" viewBox="0 0 12 7.5"><path d="M0.5 0H11.5L6.8 7Q6 8 5.2 7Z" fill="#8e939b"/></svg>
<div style="left:36px;top:242px;width:63px;height:42px;background:#fbfbfb;border:1px solid #e2e3e5;border-radius:9px;"></div>
<svg style="left:58px;top:252.5px;" width="20" height="20" viewBox="0 0 20 20"><path d="M0.500 4.500H11.500M7.500 15H19" stroke="#4a4f57" stroke-width="1.500" fill="none"/><circle cx="14.500" cy="4.500" r="2.700" stroke="#4a4f57" stroke-width="1.500" fill="none"/><circle cx="4" cy="15" r="2.700" stroke="#4a4f57" stroke-width="1.500" fill="none"/></svg>
<div style="left:1368px;top:173px;width:346px;height:47.5px;background:#fbfbfb;border:1px solid #e2e3e5;border-radius:9px;"></div>
<svg style="left:1391px;top:184px;" width="18" height="22.3" viewBox="0 0 19 23.5"><path d="M9.500 0V3.500" stroke="#2a3039" stroke-width="1.800"/><rect x="0.900" y="3.900" width="17.200" height="18.600" rx="3" stroke="#2a3039" stroke-width="1.800" fill="none"/><circle cx="9.500" cy="10.600" r="2.500" fill="#2a3039"/><path d="M4.500 18.800C4.500 15.500 6.500 14.200 9.500 14.200S14.500 15.500 14.500 18.800Z" fill="#2a3039"/></svg>
<span style="left:1419px;top:189px;font-size:16.8px;line-height:16.8px;color:#2b313b;letter-spacing:0.1px;-webkit-text-stroke:0.3px #2b313b;">ACCOUNTADMIN</span>
<div style="left:1577px;top:193px;width:6px;height:6px;background:#1fc58d;border-radius:3px;"></div>
<span style="left:1593px;top:189px;font-size:16.8px;line-height:16.8px;color:#2b313b;letter-spacing:-0.79px;-webkit-text-stroke:0.3px #2b313b;">SECURE_WH</span>
<div style="left:1726px;top:173px;width:98px;height:47.5px;background:#fbfbfb;border:1px solid #e2e3e5;border-radius:9px;"></div>
<span style="left:1747px;top:187px;font-size:20.6px;line-height:20.6px;color:#1e252f;letter-spacing:0.43px;-webkit-text-stroke:0.55px #1e252f;">Share</span>
<div style="left:1836px;top:170px;width:54px;height:54px;border:4px solid #1f6fde;border-radius:27px;"></div>
<svg style="left:1856.7px;top:189px;" width="13.5" height="16" viewBox="0 0 13.5 16"><path d="M0.5 1.2Q0.5 0 1.700 0.6L12.4 7.1Q13.4 8 12.4 8.9L1.700 15.4Q0.5 16 0.5 14.8Z" fill="#1f6fde"/></svg>
<span style="left:1658.7px;top:255px;font-size:17.7px;line-height:17.7px;color:#8a8f98;letter-spacing:0.75px;">Updated 5 minutes ago</span>
<svg style="left:1863.5px;top:259px;" width="10.5" height="7" viewBox="0 0 10.5 7"><path d="M0.4 0H10.1L6 6.4Q5.25 7.4 4.5 6.4Z" fill="#a9adb3"/></svg>
<div style="left:0px;top:307px;width:1920px;height:1px;background:#e3e4e6;"></div>
</section>
<aside>
<span style="left:24.5px;top:341px;font-size:20.4px;line-height:20.4px;color:#2462c4;letter-spacing:1.52px;-webkit-text-stroke:0.75px #2462c4;">Worksheets</span>
<span style="left:182.5px;top:341px;font-size:20.4px;line-height:20.4px;color:#5b6068;letter-spacing:1.18px;-webkit-text-stroke:0.75px #5b6068;">Databases</span>
<div style="left:0px;top:381px;width:480px;height:1px;background:#e9e9e9;"></div>
<div style="left:24px;top:379px;width:122px;height:3px;background:#2a6ad0;"></div>
<svg style="left:27px;top:407px;" width="18" height="18" viewBox="0 0 18 18"><circle cx="7" cy="7" r="6" stroke="#666b73" stroke-width="1.600" fill="none"/><path d="M11.400 11.400L16.500 16.500" stroke="#666b73" stroke-width="1.800" stroke-linecap="round"/></svg>
<span style="left:54.5px;top:408px;font-size:17.6px;line-height:17.6px;color:#555a62;letter-spacing:-0.15px;-webkit-text-stroke:0.5px #555a62;">Search</span>
<svg style="left:383px;top:407px;" width="18" height="18" viewBox="0 0 18 18"><path d="M9 0.5V17.5M0.5 9H17.5" stroke="#3a3f47" stroke-width="2.3" fill="none"/></svg>
<div style="left:427.5px;top:413.6px;width:4.6px;height:4.6px;background:#3a3f47;border-radius:3px;"></div>
<div style="left:434.7px;top:413.6px;width:4.6px;height:4.6px;background:#3a3f47;border-radius:3px;"></div>
<div style="left:441.9px;top:413.6px;width:4.6px;height:4.6px;background:#3a3f47;border-radius:3px;"></div>
<div style="left:24px;top:451px;width:407px;height:44.5px;background:#d7e6fd;border-radius:9px;"></div>
<ul>
<svg style="left:50px;top:462.2px;" width="20" height="22" viewBox="0 0 20 22"><path d="M1 4A3 3 0 0 1 4 1H11.500L19 8.500V18A3 3 0 0 1 16 21H4A3 3 0 0 1 1 18Z" stroke="#2268d6" stroke-width="1.700" fill="none" stroke-linejoin="round"/><path d="M11 1.500V6.500A2.500 2.500 0 0 0 13.500 9H18.500" stroke="#2268d6" stroke-width="1.700" fill="none"/></svg>
<li style="left:84.5px;top:464px;font-size:19px;line-height:19px;color:#1a5cc0;letter-spacing:0.44px;-webkit-text-stroke:0.35px #1a5cc0;">2022-11-29 3:05pm</li>
<svg style="left:50px;top:507.2px;" width="20" height="22" viewBox="0 0 20 22"><path d="M1 4A3 3 0 0 1 4 1H11.500L19 8.500V18A3 3 0 0 1 16 21H4A3 3 0 0 1 1 18Z" stroke="#6a6e75" stroke-width="1.700" fill="none" stroke-linejoin="round"/><path d="M11 1.500V6.500A2.500 2.500 0 0 0 13.500 9H18.500" stroke="#6a6e75" stroke-width="1.700" fill="none"/></svg>
<li style="left:84.5px;top:509px;font-size:19px;line-height:19px;color:#3b4048;letter-spacing:0.22px;">2022-11-29 2:20pm</li>
<svg style="left:50px;top:552.2px;" width="20" height="22" viewBox="0 0 20 22"><path d="M1 4A3 3 0 0 1 4 1H11.500L19 8.500V18A3 3 0 0 1 16 21H4A3 3 0 0 1 1 18Z" stroke="#6a6e75" stroke-width="1.700" fill="none" stroke-linejoin="round"/><path d="M11 1.500V6.500A2.500 2.500 0 0 0 13.500 9H18.500" stroke="#6a6e75" stroke-width="1.700" fill="none"/></svg>
<li style="left:84.5px;top:554px;font-size:19px;line-height:19px;color:#3b4048;letter-spacing:0.03px;">2022-11-29 12:22pm</li>
<svg style="left:50px;top:597.2px;" width="20" height="22" viewBox="0 0 20 22"><path d="M1 4A3 3 0 0 1 4 1H11.500L19 8.500V18A3 3 0 0 1 16 21H4A3 3 0 0 1 1 18Z" stroke="#6a6e75" stroke-width="1.700" fill="none" stroke-linejoin="round"/><path d="M11 1.500V6.500A2.500 2.500 0 0 0 13.500 9H18.500" stroke="#6a6e75" stroke-width="1.700" fill="none"/></svg>
<li style="left:84.5px;top:599px;font-size:19px;line-height:19px;color:#3b4048;letter-spacing:-0.06px;">2022-11-29 10:13am</li>
<svg style="left:50px;top:642.2px;" width="20" height="22" viewBox="0 0 20 22"><path d="M1 4A3 3 0 0 1 4 1H11.500L19 8.500V18A3 3 0 0 1 16 21H4A3 3 0 0 1 1 18Z" stroke="#6a6e75" stroke-width="1.700" fill="none" stroke-linejoin="round"/><path d="M11 1.500V6.500A2.500 2.500 0 0 0 13.500 9H18.500" stroke="#6a6e75" stroke-width="1.700" fill="none"/></svg>
<li style="left:84.5px;top:644px;font-size:19px;line-height:19px;color:#3b4048;letter-spacing:-0.06px;">2022-11-28 1:14pm</li>
<svg style="left:50px;top:687.2px;" width="20" height="22" viewBox="0 0 20 22"><path d="M1 4A3 3 0 0 1 4 1H11.500L19 8.500V18A3 3 0 0 1 16 21H4A3 3 0 0 1 1 18Z" stroke="#6a6e75" stroke-width="1.700" fill="none" stroke-linejoin="round"/><path d="M11 1.500V6.500A2.500 2.500 0 0 0 13.500 9H18.500" stroke="#6a6e75" stroke-width="1.700" fill="none"/></svg>
<li style="left:84.5px;top:689px;font-size:19px;line-height:19px;color:#3b4048;letter-spacing:0.32px;">2022-11-23 4:08pm</li>
<svg style="left:50px;top:732.2px;" width="20" height="22" viewBox="0 0 20 22"><path d="M1 4A3 3 0 0 1 4 1H11.500L19 8.500V18A3 3 0 0 1 16 21H4A3 3 0 0 1 1 18Z" stroke="#6a6e75" stroke-width="1.700" fill="none" stroke-linejoin="round"/><path d="M11 1.500V6.500A2.500 2.500 0 0 0 13.500 9H18.500" stroke="#6a6e75" stroke-width="1.700" fill="none"/></svg>
<li style="left:84.5px;top:734px;font-size:19px;line-height:19px;color:#3b4048;letter-spacing:-0.01px;">2022-11-23 11:45am</li>
<svg style="left:50px;top:777.2px;" width="20" height="22" viewBox="0 0 20 22"><path d="M1 4A3 3 0 0 1 4 1H11.500L19 8.500V18A3 3 0 0 1 16 21H4A3 3 0 0 1 1 18Z" stroke="#6a6e75" stroke-width="1.700" fill="none" stroke-linejoin="round"/><path d="M11 1.500V6.500A2.500 2.500 0 0 0 13.500 9H18.500" stroke="#6a6e75" stroke-width="1.700" fill="none"/></svg>
<li style="left:84.5px;top:779px;font-size:19px;line-height:19px;color:#3b4048;letter-spacing:-0.12px;">2022-11-22 10:51am</li>
<svg style="left:50px;top:822.2px;" width="20" height="22" viewBox="0 0 20 22"><path d="M1 4A3 3 0 0 1 4 1H11.500L19 8.500V18A3 3 0 0 1 16 21H4A3 3 0 0 1 1 18Z" stroke="#6a6e75" stroke-width="1.700" fill="none" stroke-linejoin="round"/><path d="M11 1.500V6.500A2.500 2.500 0 0 0 13.500 9H18.500" stroke="#6a6e75" stroke-width="1.700" fill="none"/></svg>
<li style="left:84.5px;top:824px;font-size:19px;line-height:19px;color:#3b4048;">2022-11-08 12:14pm</li>
<svg style="left:50px;top:867.2px;" width="20" height="22" viewBox="0 0 20 22"><path d="M1 4A3 3 0 0 1 4 1H11.500L19 8.500V18A3 3 0 0 1 16 21H4A3 3 0 0 1 1 18Z" stroke="#6a6e75" stroke-width="1.700" fill="none" stroke-linejoin="round"/><path d="M11 1.500V6.500A2.500 2.500 0 0 0 13.500 9H18.500" stroke="#6a6e75" stroke-width="1.700" fill="none"/></svg>
<li style="left:84.5px;top:869px;font-size:19px;line-height:19px;color:#3b4048;letter-spacing:0.15px;">2022-11-03 12:52pm</li>
<svg style="left:50px;top:912.2px;" width="20" height="22" viewBox="0 0 20 22"><path d="M1 4A3 3 0 0 1 4 1H11.500L19 8.500V18A3 3 0 0 1 16 21H4A3 3 0 0 1 1 18Z" stroke="#6a6e75" stroke-width="1.700" fill="none" stroke-linejoin="round"/><path d="M11 1.500V6.500A2.500 2.500 0 0 0 13.500 9H18.500" stroke="#6a6e75" stroke-width="1.700" fill="none"/></svg>
<li style="left:84.5px;top:914px;font-size:19px;line-height:19px;color:#3b4048;letter-spacing:0.21px;">2022-11-03 12:48pm</li>
</ul>
<div style="left:455px;top:451px;width:25px;height:484px;background:#f1f1f1;"></div>
<div style="left:457px;top:476px;width:21px;height:360px;background:#c1c1c1;"></div>
<svg style="left:462px;top:461px;" width="11" height="6" viewBox="0 0 11 6"><path d="M0 6L5.5 0L11 6Z" fill="#a3a3a3"/></svg>
<svg style="left:461.5px;top:918.5px;" width="11" height="6" viewBox="0 0 11 6"><path d="M0 0L5.5 6L11 0Z" fill="#505050"/></svg>
<div style="left:480px;top:308px;width:2px;height:627px;background:#e3e3e3;"></div>
</aside>
<main>
<span style="left:612.5px;top:344px;font-size:17.6px;line-height:17.6px;color:#555a62;letter-spacing:-1.04px;-webkit-text-stroke:0.35px #555a62;">SECURE_DB.PUBLIC</span>
<svg style="left:786px;top:349px;" width="10" height="6.8" viewBox="0 0 10 6.8"><path d="M0.4 0H9.6L5.7 6.2Q5 7 4.3 6.2Z" fill="#868b93"/></svg>
<div style="left:593px;top:400px;width:1px;height:213px;background:#f4f4f4;"></div>
<span style="left:530.8px;top:402px;font-size:19.2px;line-height:19.2px;color:#555a62;letter-spacing:0.34px;">64</span>
<span style="left:530.8px;top:429px;font-size:19.2px;line-height:19.2px;color:#555a62;letter-spacing:0.34px;">65</span>
<span style="left:530.8px;top:456px;font-size:19.2px;line-height:19.2px;color:#555a62;letter-spacing:0.34px;">66</span>
<span style="left:530.8px;top:510px;font-size:19.2px;line-height:19.2px;color:#555a62;letter-spacing:0.34px;">67</span>
<span style="left:530.8px;top:537px;font-size:19.2px;line-height:19.2px;color:#555a62;letter-spacing:0.34px;">68</span>
<span style="left:530.8px;top:564px;font-size:19.2px;line-height:19.2px;color:#555a62;letter-spacing:0.34px;">69</span>
<span style="left:530.8px;top:591px;font-size:19.2px;line-height:19.2px;color:#555a62;letter-spacing:0.34px;">70</span>
<div style="left:594px;top:451px;width:6px;height:53.5px;background:#4a7be8;"></div>
<span class="m" style="left:617.3px;top:454px;font-size:20px;line-height:20px;color:#1f5fb6;letter-spacing:0.34px;-webkit-text-stroke:0.25px #1f5fb6;">alter</span>
<span class="m" style="left:692.49px;top:454px;font-size:20px;line-height:20px;color:#1f5fb6;letter-spacing:0.34px;-webkit-text-stroke:0.25px #1f5fb6;">table</span>
<span class="m" style="left:767.68px;top:454px;font-size:20px;line-height:20px;color:#42474f;letter-spacing:-0.24px;-webkit-text-stroke:0.1px #42474f;">if</span>
<span class="m" style="left:805.28px;top:454px;font-size:20px;line-height:20px;color:#1f5fb6;letter-spacing:0.38px;-webkit-text-stroke:0.25px #1f5fb6;">exists</span>
<span class="m" style="left:893px;top:454px;font-size:20px;line-height:20px;color:#42474f;letter-spacing:0.5px;-webkit-text-stroke:0.1px #42474f;">secure_db.public.secure_data</span>
<span class="m" style="left:1256.43px;top:454px;font-size:20px;line-height:20px;color:#1f5fb6;letter-spacing:0.38px;-webkit-text-stroke:0.25px #1f5fb6;">modify</span>
<span class="m" style="left:1344.16px;top:454px;font-size:20px;line-height:20px;color:#1f5fb6;letter-spacing:0.38px;-webkit-text-stroke:0.25px #1f5fb6;">column</span>
<span class="m" style="left:1431.88px;top:454px;font-size:20px;line-height:20px;color:#42474f;letter-spacing:0.46px;-webkit-text-stroke:0.1px #42474f;">PHONE_NUMBER</span>
<span class="m" style="left:1594.8px;top:454px;font-size:20px;line-height:20px;color:#1f5fb6;letter-spacing:0.15px;-webkit-text-stroke:0.25px #1f5fb6;">set</span>
<span class="m" style="left:617.3px;top:481px;font-size:20px;line-height:20px;color:#42474f;letter-spacing:0.4px;-webkit-text-stroke:0.1px #42474f;">masking</span>
<span class="m" style="left:717.56px;top:481px;font-size:20px;line-height:20px;color:#1f5fb6;letter-spacing:0.38px;-webkit-text-stroke:0.25px #1f5fb6;">policy</span>
<span class="m" style="left:805.28px;top:481px;font-size:20px;line-height:20px;color:#42474f;letter-spacing:0.49px;-webkit-text-stroke:0.1px #42474f;">employee_details_mask;</span>
<div style="left:617.3px;top:585.5px;width:1.2px;height:23px;background:#333;"></div>
<div style="left:1895px;top:398.5px;width:25px;height:214.5px;background:#f1f1f1;"></div>
<div style="left:1897px;top:479px;width:21px;height:24.5px;background:#c1c1c1;"></div>
<svg style="left:1901.5px;top:408px;" width="11" height="6" viewBox="0 0 11 6"><path d="M0 6L5.5 0L11 6Z" fill="#505050"/></svg>
<svg style="left:1901.5px;top:597px;" width="11" height="6" viewBox="0 0 11 6"><path d="M0 0L5.5 6L11 0Z" fill="#505050"/></svg>
</main>
<section>
<div style="left:482px;top:613px;width:1438px;height:309px;background:#fafafa;"></div>
<div style="left:482px;top:613px;width:1438px;height:1px;background:#e3e4e6;"></div>
<div style="left:482px;top:684px;width:1438px;height:1px;background:#e3e4e6;"></div>
<div style="left:513px;top:628px;width:150.75px;height:41.5px;background:#1a6ce7;border-radius:13px;"></div>
<div style="left:676px;top:628px;width:132px;height:41.5px;background:#1a6ce7;border-radius:13px;"></div>
<div style="left:820px;top:628px;width:146.75px;height:41.5px;background:#1a6ce7;border-radius:13px;"></div>
<svg style="left:533.5px;top:637.5px;" width="18.5" height="23" viewBox="0 0 18.5 23"><ellipse cx="9.250" cy="4.800" rx="7.800" ry="3.600" stroke="#fff" stroke-width="2.900" fill="none"/><path d="M1.450 4.800V18.200C1.450 20.200 5 21.800 9.250 21.800S17.050 20.200 17.050 18.200V4.800" stroke="#fff" stroke-width="2.900" fill="none"/></svg>
<div style="left:696px;top:639.6px;width:19.5px;height:3px;background:#fff;"></div>
<div style="left:696px;top:647.3px;width:15px;height:3px;background:#fff;"></div>
<div style="left:696px;top:655px;width:10.5px;height:3px;background:#fff;"></div>
<svg style="left:838.5px;top:637.5px;" width="22.5" height="18.5" viewBox="0 0 22.5 18.5"><path d="M1.500 0V4.500A4.500 4.500 0 0 0 6 9H20" stroke="#fff" stroke-width="3" fill="none"/><path d="M14.300 2.300L21 9L14.300 15.700" stroke="#fff" stroke-width="3" fill="none"/></svg>
<svg style="left:998px;top:640.5px;" width="22" height="16" viewBox="0 0 22 16"><path d="M1.200 14.800L8 7.200L12.600 11.400L20.800 1.200" stroke="#696b70" stroke-width="2.900" fill="none"/></svg>
<svg style="left:1733.5px;top:636.5px;" width="24.5" height="24" viewBox="0 0 24.5 24"><circle cx="9.800" cy="9.800" r="8.100" stroke="#696b70" stroke-width="2.900" fill="none"/><path d="M15.800 15.800L22.800 22.600" stroke="#696b70" stroke-width="3" stroke-linecap="round"/></svg>
<svg style="left:1790.5px;top:636.5px;" width="17" height="24" viewBox="0 0 17 24"><path d="M8.500 0.800V16M1.800 9.600L8.500 16.400L15.200 9.600" stroke="#696b70" stroke-width="2.900" fill="none" stroke-linecap="round"/><path d="M3.200 22.200H13.800" stroke="#696b70" stroke-width="2.900" stroke-linecap="round"/></svg>
<svg style="left:1844px;top:636.5px;" width="24" height="23.5" viewBox="0 0 24 23.5"><rect x="1.500" y="1.500" width="21" height="20.500" rx="3.500" stroke="#696b70" stroke-width="3" fill="none"/><path d="M13.300 1.500V22" stroke="#696b70" stroke-width="2.900"/></svg>
<span style="left:567.5px;top:639px;font-size:20.5px;line-height:20.5px;color:#fff;font-weight:700;letter-spacing:0.47px;">Objects</span>
<span style="left:730.5px;top:639px;font-size:20.5px;line-height:20.5px;color:#fff;font-weight:700;letter-spacing:0.06px;">Editor</span>
<span style="left:875px;top:639px;font-size:20.5px;line-height:20.5px;color:#fff;font-weight:700;letter-spacing:-0.01px;">Results</span>
<span style="left:1034px;top:639px;font-size:20.5px;line-height:20.5px;color:#6b7078;font-weight:700;letter-spacing:0.74px;">Chart</span>
<div style="left:495.5px;top:697px;width:986.5px;height:97px;background:#fff;border:1px solid #e0e0e0;"></div>
<div style="left:550px;top:697px;width:1px;height:97px;background:#e2e2e2;"></div>
<div style="left:495.5px;top:749.5px;width:986.5px;height:1px;background:#e2e2e2;"></div>
<span style="left:569.5px;top:717px;font-size:19.5px;line-height:19.5px;color:#15191f;letter-spacing:1.29px;-webkit-text-stroke:0.5px #15191f;">status</span>
<span style="left:516.3px;top:764px;font-size:19.5px;line-height:19.5px;color:#b9bbbf;">1</span>
<span style="left:569.5px;top:764px;font-size:19.5px;line-height:19.5px;color:#4a4f57;letter-spacing:0.7px;">Statement executed successfully.</span>
<div style="left:1495.3px;top:685px;width:2.6px;height:250px;background:#e2e2e2;"></div>
<div style="left:1498px;top:685px;width:394px;height:250px;background:#fafafa;"></div>
<div style="left:1515px;top:697px;width:359px;height:194.5px;background:#f2f2f2;border-radius:14px;"></div>
<span style="left:1533px;top:724px;font-size:18.2px;line-height:18.2px;color:#272d37;letter-spacing:0.45px;-webkit-text-stroke:0.2px #272d37;">Query Details</span>
<div style="left:1833px;top:729.8px;width:4.6px;height:4.6px;background:#3a3f47;border-radius:3px;"></div>
<div style="left:1840.6px;top:729.8px;width:4.6px;height:4.6px;background:#3a3f47;border-radius:3px;"></div>
<div style="left:1848.2px;top:729.8px;width:4.6px;height:4.6px;background:#3a3f47;border-radius:3px;"></div>
<span style="left:1533px;top:780px;font-size:18.2px;line-height:18.2px;color:#6b7078;letter-spacing:0.51px;">Query duration</span>
<span style="left:1808px;top:780px;font-size:18.2px;line-height:18.2px;color:#1e252f;letter-spacing:1px;-webkit-text-stroke:0.2px #1e252f;">54ms</span>
<div style="left:1533px;top:811px;width:323px;height:12px;background:#1bcf94;border-radius:3.5px;"></div>
<div style="left:1533px;top:811px;width:251px;height:12px;background:#3478e8;border-radius:3.5px 0 0 3.5px;"></div>
<span style="left:1533px;top:843px;font-size:18.2px;line-height:18.2px;color:#6b7078;letter-spacing:-0.17px;">Rows</span>
<span style="left:1846.38px;top:843px;font-size:18.2px;line-height:18.2px;color:#1e252f;-webkit-text-stroke:0.2px #1e252f;">1</span>
<div style="left:1515px;top:901.5px;width:359px;height:40px;background:#f2f2f2;border-radius:14px 14px 0 0;"></div>
<span style="left:1533px;top:920px;font-size:18.2px;line-height:18.2px;color:#1e252f;letter-spacing:0.09px;-webkit-text-stroke:0.2px #1e252f;">status</span>
<span style="left:1832.8px;top:915px;font-size:21px;line-height:21px;color:#8b9097;letter-spacing:-2.69px;">Aa</span>
<div style="left:1892px;top:685px;width:28px;height:250px;background:#f1f1f1;"></div>
<div style="left:1894px;top:710px;width:21.5px;height:147px;background:#c1c1c1;"></div>
<svg style="left:1899px;top:696px;" width="11" height="6" viewBox="0 0 11 6"><path d="M0 6L5.5 0L11 6Z" fill="#a3a3a3"/></svg>
<svg style="left:1899px;top:918.5px;" width="11" height="6" viewBox="0 0 11 6"><path d="M0 0L5.5 6L11 0Z" fill="#505050"/></svg>
</section>
<footer>
<div style="left:0px;top:935px;width:1920px;height:85px;background:#fff;"></div>
<div style="left:0px;top:935px;width:1920px;height:1px;background:#d9d9d9;"></div>
<svg style="left:33px;top:966px;" width="17.5" height="22.5" viewBox="0 0 17.5 22.5"><defs><linearGradient id="ig3" x1="0" y1="0" x2="0.600" y2="1"><stop offset="0" stop-color="#35a8ea"/><stop offset="0.500" stop-color="#1a66c0"/><stop offset="1" stop-color="#0b3a86"/></linearGradient></defs><path d="M0.600 0.600H12.200L16.600 5V21.400H0.600Z" fill="#fdfdfd" stroke="#8a8d91" stroke-width="1.100"/><path d="M12.200 0.600V5H16.600" fill="#eef0f2" stroke="#8a8d91" stroke-width="0.900"/><rect x="3.900" y="7.100" width="9.100" height="8.900" fill="url(#ig3)"/><rect x="10" y="8.100" width="2" height="1.700" fill="#e4f6ff"/></svg>
<span style="left:74px;top:970px;font-size:19px;line-height:19px;color:#45484c;letter-spacing:0.13px;">IMG-20210814-W....jpg</span>
<svg style="left:312.5px;top:973.5px;" width="13.5" height="8" viewBox="0 0 13.5 8"><path d="M1 7L6.75 1.2L12.5 7" stroke="#474a4e" stroke-width="2" fill="none"/></svg>
<div style="left:353.7px;top:945px;width:1.6px;height:65.5px;background:#d4d5d7;"></div>
<svg style="left:382.7px;top:966px;" width="17.5" height="22.5" viewBox="0 0 17.5 22.5"><defs><linearGradient id="ig4" x1="0" y1="0" x2="0.600" y2="1"><stop offset="0" stop-color="#35a8ea"/><stop offset="0.500" stop-color="#1a66c0"/><stop offset="1" stop-color="#0b3a86"/></linearGradient></defs><path d="M0.600 0.600H12.200L16.600 5V21.400H0.600Z" fill="#fdfdfd" stroke="#8a8d91" stroke-width="1.100"/><path d="M12.200 0.600V5H16.600" fill="#eef0f2" stroke="#8a8d91" stroke-width="0.900"/><rect x="3.900" y="7.100" width="9.100" height="8.900" fill="url(#ig4)"/><rect x="10" y="8.100" width="2" height="1.700" fill="#e4f6ff"/></svg>
<span style="left:423.7px;top:970px;font-size:19px;line-height:19px;color:#45484c;letter-spacing:0.13px;">IMG-20210810-W....jpg</span>
<svg style="left:662.2px;top:973.5px;" width="13.5" height="8" viewBox="0 0 13.5 8"><path d="M1 7L6.75 1.2L12.5 7" stroke="#474a4e" stroke-width="2" fill="none"/></svg>
<div style="left:703.4px;top:945px;width:1.6px;height:65.5px;background:#d4d5d7;"></div>
<svg style="left:732.4px;top:966px;" width="17.5" height="22.5" viewBox="0 0 17.5 22.5"><defs><linearGradient id="ig5" x1="0" y1="0" x2="0.600" y2="1"><stop offset="0" stop-color="#35a8ea"/><stop offset="0.500" stop-color="#1a66c0"/><stop offset="1" stop-color="#0b3a86"/></linearGradient></defs><path d="M0.600 0.600H12.200L16.600 5V21.400H0.600Z" fill="#fdfdfd" stroke="#8a8d91" stroke-width="1.100"/><path d="M12.200 0.600V5H16.600" fill="#eef0f2" stroke="#8a8d91" stroke-width="0.900"/><rect x="3.900" y="7.100" width="9.100" height="8.900" fill="url(#ig5)"/><rect x="10" y="8.100" width="2" height="1.700" fill="#e4f6ff"/></svg>
<span style="left:773.4px;top:970px;font-size:19px;line-height:19px;color:#45484c;letter-spacing:0.13px;">IMG-20210814-W....jpg</span>
<svg style="left:1011.9px;top:973.5px;" width="13.5" height="8" viewBox="0 0 13.5 8"><path d="M1 7L6.75 1.2L12.5 7" stroke="#474a4e" stroke-width="2" fill="none"/></svg>
<div style="left:1053.1px;top:945px;width:1.6px;height:65.5px;background:#d4d5d7;"></div>
<svg style="left:1082.1px;top:966px;" width="17.5" height="22.5" viewBox="0 0 17.5 22.5"><defs><linearGradient id="ig6" x1="0" y1="0" x2="0.600" y2="1"><stop offset="0" stop-color="#35a8ea"/><stop offset="0.500" stop-color="#1a66c0"/><stop offset="1" stop-color="#0b3a86"/></linearGradient></defs><path d="M0.600 0.600H12.200L16.600 5V21.400H0.600Z" fill="#fdfdfd" stroke="#8a8d91" stroke-width="1.100"/><path d="M12.200 0.600V5H16.600" fill="#eef0f2" stroke="#8a8d91" stroke-width="0.900"/><rect x="3.900" y="7.100" width="9.100" height="8.900" fill="url(#ig6)"/><rect x="10" y="8.100" width="2" height="1.700" fill="#e4f6ff"/></svg>
<span style="left:1123.1px;top:970px;font-size:19px;line-height:19px;color:#45484c;letter-spacing:0.13px;">IMG-20210814-W....jpg</span>
<svg style="left:1361.6px;top:973.5px;" width="13.5" height="8" viewBox="0 0 13.5 8"><path d="M1 7L6.75 1.2L12.5 7" stroke="#474a4e" stroke-width="2" fill="none"/></svg>
<div style="left:1402.8px;top:945px;width:1.6px;height:65.5px;background:#d4d5d7;"></div>
<div style="left:1748.5px;top:953px;width:117px;height:47px;background:#fff;border:1px solid #dadce0;border-radius:6px;"></div>
<span style="left:1773px;top:968px;font-size:18.5px;line-height:18.5px;color:#2d6ccd;letter-spacing:-0.28px;-webkit-text-stroke:0.2px #2d6ccd;">Show all</span>
<svg style="left:1885.5px;top:970px;" width="14" height="14" viewBox="0 0 14 14"><path d="M1 1L13 13M13 1L1 13" stroke="#4a4d51" stroke-width="2.2" fill="none"/></svg>
</footer>
<footer>
<div style="left:0px;top:1020px;width:1920px;height:60px;background:#4b4643;"></div>
<svg style="left:24px;top:1038px;" width="24" height="24" viewBox="0 0 24 24"><path d="M0 3.400L9.800 2V11.400H0ZM11 1.800L24 0V11.400H11ZM0 12.600H9.800V22L0 20.600ZM11 12.600H24V24L11 22.200Z" fill="#fff"/></svg>
<div style="left:72px;top:1020px;width:515.5px;height:60px;background:#f2f2f2;border:2px solid #c6c6c6;"></div>
<svg style="left:89.5px;top:1037px;" width="25" height="25.5" viewBox="0 0 25 25.5"><circle cx="16.3" cy="8.800" r="7.4" stroke="#111" stroke-width="1.900" fill="none"/><path d="M10.900 14L0.900 24.500" stroke="#111" stroke-width="2"/></svg>
<span style="left:132.5px;top:1043px;font-size:21.5px;line-height:21.5px;color:#1a1a1a;letter-spacing:0.36px;">Type here to search</span>
<div style="left:611.7px;top:1038px;width:24px;height:24px;border:3.200px solid #fff;border-radius:12px;"></div>
<svg style="left:683.5px;top:1038px;" width="25.5" height="23.5" viewBox="0 0 25.5 23.5"><path d="M2.500 0.600V3.600H16.500V0.600M2.500 22.900V19.900H16.500V22.900" stroke="#fff" stroke-width="1.300" fill="none"/><rect x="0.700" y="6.300" width="17.600" height="10.900" stroke="#fff" stroke-width="1.300" fill="none"/><path d="M23 0.600V6.800M23 10.200V22.900" stroke="#fff" stroke-width="1.500"/><rect x="21.800" y="7.600" width="2.400" height="2.400" fill="#fff"/></svg>
<div style="left:743px;top:1077px;width:47.5px;height:3px;background:#8db9ea;"></div>
<div style="left:867px;top:1077px;width:46.75px;height:3px;background:#8db9ea;"></div>
<div style="left:989.5px;top:1077px;width:46px;height:3px;background:#8db9ea;"></div>
<div style="left:1050px;top:1077px;width:46.75px;height:3px;background:#8db9ea;"></div>
<div style="left:1172px;top:1077px;width:46.75px;height:3px;background:#8db9ea;"></div>
<div style="left:1232.5px;top:1077px;width:47px;height:3px;background:#8db9ea;"></div>
<div style="left:1293.75px;top:1077px;width:44.25px;height:3px;background:#8db9ea;"></div>
<div style="left:1105px;top:1020px;width:53px;height:60px;background:#6d6966;"></div>
<div style="left:1158px;top:1020px;width:5.75px;height:60px;background:#5d5956;"></div>
<div style="left:1105px;top:1077px;width:58.5px;height:3px;background:#8db9ea;"></div>
<div style="left:1206px;top:1077px;width:12.75px;height:3px;background:#6f9bcf;"></div>
<div style="left:901.5px;top:1077px;width:12.25px;height:3px;background:#6f9bcf;"></div>
<svg style="left:750.5px;top:1036px;" width="32.5" height="28" viewBox="0 0 32.5 28"><path d="M0 4.500a2 2 0 0 1 2-2h9l3 3H0z" fill="#e3a21a"/><path d="M0 5.500h30.500a2 2 0 0 1 2 2V24a2 2 0 0 1-2 2H2a2 2 0 0 1-2-2z" fill="#ffd35c"/><path d="M0 5.500h32.500v2H0z" fill="#f2b830"/><path d="M5.500 16a2 2 0 0 1 2-2h17.500a2 2 0 0 1 2 2V27.500H21V20.500H11.500V27.500H5.500z" fill="#3a8ee0"/></svg>
<svg style="left:810.75px;top:1032px;" width="37" height="34" viewBox="0 0 37 34"><path d="M0.300 10.600L17.400 0.300Q18.200 -0.100 19 0.300L36.700 10.600Z" fill="#0f64b8"/><path d="M0.300 10.400H36.700V32.700a1 1 0 0 1-1 1H1.300a1 1 0 0 1-1-1Z" fill="#2ba6ee"/><path d="M3.800 11H33.200L18.500 22.400Z" fill="#f4f6fa"/><path d="M0.300 10.400L18.500 24.300L36.700 10.400V12.600L18.500 26.200L0.300 12.600Z" fill="#1c86da" opacity="0.550"/><path d="M18.500 23.400L36.700 33.700H36.700V12L18.500 23.400Z" fill="#38b6f4" opacity="0.600"/><path d="M15 25.800L36.700 33.700H3Z" fill="#1a84da" opacity="0.700"/></svg>
<svg style="left:871.5px;top:1032px;" width="40" height="40" viewBox="0 0 40 40"><circle cx="26.500" cy="5.800" r="3.700" fill="#5059c9"/><circle cx="16" cy="6.800" r="5.400" fill="#7b83eb"/><path d="M22.500 12.500h9.500a1.500 1.500 0 0 1 1.500 1.500v8a5.500 5.500 0 0 1-11 0z" fill="#5059c9"/><path d="M8 12.500h17a1.600 1.600 0 0 1 1.600 1.600V24a9.300 9.300 0 0 1-18.600 0z" fill="#7b83eb"/><rect x="0" y="7.500" width="18" height="18" rx="1.800" fill="#4b53bc"/><path d="M4.500 12h9v2.500H10.400v7.500H7.600v-7.500H4.500z" fill="#fff"/><circle cx="30" cy="28.700" r="10" fill="#d5213a"/></svg>
<span style="left:896.5px;top:1052px;font-size:19px;line-height:19px;color:#fff;font-weight:700;">2</span>
<svg style="left:938.3px;top:1034.3px;" width="28" height="30" viewBox="0 0 28 30"><path d="M1.500 6V23C1.500 26 6.500 28 12.500 28S23.500 26 23.500 23V6Z" fill="#b7cbea"/><ellipse cx="12.500" cy="6" rx="11" ry="5" fill="#dbe6f6"/><path d="M1.500 12C1.500 15 6.500 17 12.500 17S23.500 15 23.500 12M1.500 18C1.500 21 6.500 23 12.500 23S23.500 21 23.500 18" stroke="#9fb6d8" stroke-width="1.200" fill="none"/><circle cx="21" cy="23" r="6.800" fill="#4db52c"/><path d="M19 19.500L24.500 23L19 26.500Z" fill="#fff"/></svg>
<svg style="left:993.75px;top:1032px;" width="36.5" height="36.5" viewBox="0 0 36.5 36.5"><defs><linearGradient id="eg1" x1="0.200" y1="0" x2="0.700" y2="1"><stop offset="0" stop-color="#2aa8ec"/><stop offset="1" stop-color="#0d5cb0"/></linearGradient><linearGradient id="eg2" x1="0" y1="0.300" x2="1" y2="0.500"><stop offset="0" stop-color="#2cbfe6"/><stop offset="0.450" stop-color="#35c8c0"/><stop offset="1" stop-color="#74dd4c"/></linearGradient></defs><circle cx="18.250" cy="18.250" r="18" fill="url(#eg1)"/><path d="M2.200 11.500C5.500 3 15 -1.500 25 1.800C33.500 5 38 13 35.800 20.500C34 25.500 28.500 26.800 24 24.800C27.500 22 27.800 16.500 23 13.800C17 10.600 9 12.500 4.500 19C2.500 22 1.200 17 2.200 11.500Z" fill="url(#eg2)"/><path d="M13 18.500C15 14.500 20 13.800 23 16C26 18.300 25.500 22.500 22.500 24.800C25 28.500 31 28 34 24.500C31 32.500 22 37.500 14 34C8.500 30.500 9 23.500 13 18.500Z" fill="#0f4f9c" opacity="0.900"/></svg>
<svg style="left:1055px;top:1033.5px;" width="36" height="33" viewBox="0 0 36 33"><path d="M10 0H33.500a2 2 0 0 1 2 2V8H10z" fill="#41a5ee"/><path d="M10 8H35.500V16.500H10z" fill="#2b7cd3"/><path d="M10 16.500H35.500V25H10z" fill="#185abd"/><path d="M10 25H35.500V31a2 2 0 0 1-2 2H12a2 2 0 0 1-2-2z" fill="#103f91"/><rect x="0" y="7" width="19" height="19" rx="1.800" fill="#185abd"/><path d="M3.600 11.500h2.200l1.500 7 1.700-7h1.900l1.700 7 1.500-7h2.100l-2.600 10h-2l-1.700-6.800-1.700 6.800h-2z" fill="#fff"/></svg>
<svg style="left:1113px;top:1032px;" width="36" height="36" viewBox="0 0 36 36"><circle cx="18" cy="18" r="17.9" fill="#fff"/><g id="cw"><path d="M2.412 9A18 18 0 0 1 33.588 9L18 9A9 9 0 0 0 10.206 22.5Z" fill="#ea4335"/></g><path d="M2.412 9A18 18 0 0 1 33.588 9L18 9A9 9 0 0 0 10.206 22.5Z" fill="#fbbc04" transform="rotate(120 18 18)"/><path d="M2.412 9A18 18 0 0 1 33.588 9L18 9A9 9 0 0 0 10.206 22.5Z" fill="#34a853" transform="rotate(240 18 18)"/><circle cx="18" cy="18" r="8.4" fill="#fff"/><circle cx="18" cy="18" r="6.700" fill="#4285f4"/></svg>
<svg style="left:1176.75px;top:1033.5px;" width="36" height="33" viewBox="0 0 36 33"><path d="M10 0H22.750V8.250H10z" fill="#21a366"/><path d="M22.750 0H33.500a2 2 0 0 1 2 2V8.250H22.750z" fill="#33c481"/><path d="M10 8.250H22.750V16.500H10z" fill="#107c41"/><path d="M22.750 8.250H35.500V16.500H22.750z" fill="#21a366"/><path d="M10 16.500H22.750V24.750H10z" fill="#185c37"/><path d="M22.750 16.500H35.500V24.750H22.750z" fill="#107c41"/><path d="M10 24.750H35.500V31a2 2 0 0 1-2 2H12a2 2 0 0 1-2-2z" fill="#185c37"/><rect x="0" y="7" width="19" height="19" rx="1.800" fill="#107c41"/><path d="M4.800 11.500h2.600l2.200 3.700 2.200-3.700h2.400l-3.300 5 3.400 5h-2.600l-2.300-3.800-2.300 3.800H4.700l3.400-5z" fill="#fff"/></svg>
<svg style="left:1240.5px;top:1033px;" width="31" height="34" viewBox="0 0 31 34"><path d="M15.500 0.500C20 2.500 25 3.500 30.500 3.500V17C30.500 25 24 31 15.500 33.500C7 31 0.500 25 0.500 17V3.500C6 3.500 11 2.500 15.500 0.500Z" fill="#d7dbe0"/><path d="M15.500 3.500C19.200 5 23.200 5.900 27.500 6V17C27.500 23.300 22.500 28 15.500 30.300C8.500 28 3.500 23.300 3.500 17V6C7.800 5.900 11.800 5 15.500 3.500Z" fill="#da291c"/><path d="M7.500 9.500h4.600v3.400H7.500zM13.200 9.500h4.600v3.400h-4.600zM18.900 9.500h4.600v3.400h-4.600zM7.500 14h4.600v3.400H7.500zM18.900 14h4.600v3.400h-4.600zM7.500 18.500h4.600v3.400H7.500zM13.200 18.500h4.600v3.400h-4.600zM18.900 18.500h4.600v3.400h-4.600z" fill="#fff"/></svg>
<svg style="left:1300.5px;top:1032px;" width="36" height="36" viewBox="0 0 36 36"><defs><linearGradient id="rg" x1="0" y1="0" x2="1" y2="0.200"><stop offset="0" stop-color="#0a1fc6"/><stop offset="0.450" stop-color="#1b3fe0"/><stop offset="0.550" stop-color="#7f9df2"/><stop offset="1" stop-color="#dfe8fb"/></linearGradient></defs><path d="M0.500 1.200L31.500 4.600L28 24.500L5 26Z" fill="#dfe3ea"/><path d="M3 3.800L29 6.600L26 22.600L7 23.800Z" fill="url(#rg)"/><path d="M12 26L22 25.300L22.500 29.500C19 31 13.500 31.300 10 30.500Z" fill="#c9ced6"/><ellipse cx="15" cy="31.500" rx="8.500" ry="2.800" fill="#e6e9ee"/><circle cx="26.800" cy="28" r="7.300" fill="#e4e8e4"/><circle cx="26.800" cy="28" r="6.200" fill="#f4f6f3"/><path d="M23 25.300L26 28L23 30.700M30.600 25.300L27.600 28L30.600 30.700" stroke="#3f9a3a" stroke-width="1.700" fill="none"/></svg>
<svg style="left:1371px;top:1032px;" width="37" height="32" viewBox="0 0 37 32"><defs><linearGradient id="wg" x1="0" y1="0" x2="0" y2="1"><stop offset="0" stop-color="#ffc83a"/><stop offset="1" stop-color="#f7921e"/></linearGradient></defs><circle cx="19" cy="16" r="15.500" fill="url(#wg)"/><path d="M9 8.500H36M2 13.500H33M10 18.500H30M0 23.500H30" stroke="#fbe3b2" stroke-width="2.600" stroke-linecap="round"/></svg>
<span style="left:1419.5px;top:1042px;font-size:20.5px;line-height:20.5px;color:#fff;letter-spacing:-0.77px;">29°C</span>
<svg style="left:1500.5px;top:1043.5px;" width="19" height="11" viewBox="0 0 19 11"><path d="M1 10L9.500 1.500L18 10" stroke="#fff" stroke-width="1.500" fill="none"/></svg>
<svg style="left:1534.5px;top:1037px;" width="24" height="25.5" viewBox="0 0 24 25.5"><path d="M0.500 1.500H23.500V11.500C23.500 18.500 18.500 22.500 12 25C5.500 22.500 0.500 18.500 0.500 11.500Z" fill="#2cb34a"/><path d="M5.800 11.500L10.300 16.200L18.500 7.600" stroke="#fff" stroke-width="2.800" fill="none"/></svg>
<svg style="left:1574px;top:1041px;" width="19.5" height="19.5" viewBox="0 0 19.5 19.5"><path d="M1 19A18 18 0 0 1 19 1M5.800 19A13.200 13.200 0 0 1 19 5.800M10.600 19A8.400 8.400 0 0 1 19 10.600" stroke="#dcdcdc" stroke-width="1.500" fill="none"/><circle cx="17" cy="17" r="2" fill="#fff"/></svg>
<svg style="left:1607px;top:1043.5px;" width="24" height="14.5" viewBox="0 0 24 14.5"><rect x="0.800" y="0.800" width="20.400" height="12.600" stroke="#fff" stroke-width="1.500" fill="none"/><rect x="3" y="3" width="16" height="8.200" fill="#fff"/><rect x="21.600" y="4.500" width="2" height="5.200" fill="#fff"/></svg>
<svg style="left:1642px;top:1040.5px;" width="24" height="19" viewBox="0 0 24 19"><path d="M1 6.200H5L10.500 1V18L5 12.800H1Z" stroke="#fff" stroke-width="1.400" fill="none"/><path d="M13.600 6.500A4.500 4.500 0 0 1 13.600 12.500M16.800 4A8 8 0 0 1 16.800 15" stroke="#fff" stroke-width="1.300" fill="none"/><path d="M20 1.500A11.500 11.500 0 0 1 20 17.500" stroke="#9a9793" stroke-width="1.300" fill="none"/></svg>
<span style="left:1682.5px;top:1043px;font-size:17.5px;line-height:17.5px;color:#fff;letter-spacing:-2.46px;">ENG</span>
<span style="left:1762px;top:1028px;font-size:18.5px;line-height:18.5px;color:#fff;letter-spacing:-1.07px;">15:57</span>
<span style="left:1736.7px;top:1056px;font-size:18.5px;line-height:18.5px;color:#fff;letter-spacing:-0.07px;">29-11-2022</span>
<svg style="left:1857.5px;top:1038px;" width="25" height="23" viewBox="0 0 25 23"><path d="M0.500 0.500H24.500V17H12V22.500L6.500 17H0.500Z" fill="#fff"/><path d="M5 5H20M5 8.500H20M5 12H15" stroke="#4b4643" stroke-width="1.200"/></svg>
<div style="left:1869.3px;top:1049.5px;width:24px;height:24px;background:#4b4643;border:1.500px solid #cfcfcf;border-radius:12px;"></div>
<span style="left:1877.3px;top:1053px;font-size:18px;line-height:18px;color:#fff;font-weight:700;">1</span>
<div style="left:1912px;top:1020px;width:1.5px;height:60px;background:#7d7976;"></div>
</footer>
</body></html>
